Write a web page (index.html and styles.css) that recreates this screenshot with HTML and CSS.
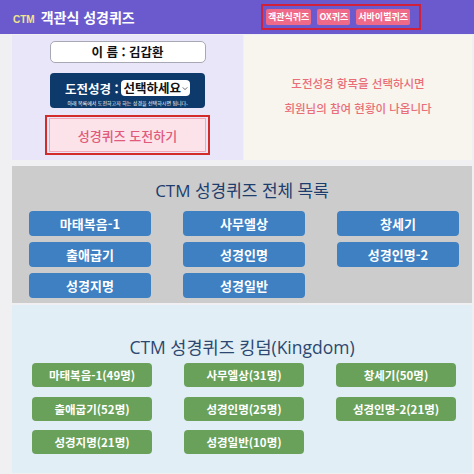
FILE: index.html
```html
<!DOCTYPE html>
<html lang="ko">
<head>
<meta charset="utf-8">
<link rel="stylesheet" href="styles.css">
</head>
<body>
<header class="topbar">
  <div class="brand"><span class="brand-ctm">CTM</span><span class="brand-title">객관식 성경퀴즈</span></div>
  <nav class="modes">
    <span class="mode">객관식퀴즈</span>
    <span class="mode">OX퀴즈</span>
    <span class="mode">서바이벌퀴즈</span>
  </nav>
</header>
<main class="page">
  <section class="top-row">
    <div class="panel-left">
      <div class="name-box">이 름 : 김갑환</div>
      <div class="choose-box">
        <div class="choose-line">
          <span class="choose-label">도전성경 :</span>
          <span class="choose-select">선택하세요<svg class="chev" viewBox="0 0 8 6" width="6" height="5"><path d="M1 1.5 L4 4.5 L7 1.5" fill="none" stroke="#555" stroke-width="1.2"/></svg></span>
        </div>
        <div class="choose-hint">아래 목록에서 도전하고자 하는 성경을 선택하시면 됩니다.</div>
      </div>
      <div class="start-outer"><div class="start-btn">성경퀴즈 도전하기</div></div>
    </div>
    <div class="panel-right">
      <p>도전성경 항목을 선택하시면</p>
      <p>회원님의 참여 현황이 나옵니다</p>
    </div>
  </section>
  <section class="list-section">
    <h2 class="list-title">CTM 성경퀴즈 전체 목록</h2>
    <div class="list-grid">
      <span class="btn-blue">마태복음-1</span>
      <span class="btn-blue">사무엘상</span>
      <span class="btn-blue">창세기</span>
      <span class="btn-blue">출애굽기</span>
      <span class="btn-blue">성경인명</span>
      <span class="btn-blue">성경인명-2</span>
      <span class="btn-blue">성경지명</span>
      <span class="btn-blue">성경일반</span>
    </div>
  </section>
  <section class="king-section">
    <h2 class="king-title">CTM 성경퀴즈 킹덤(Kingdom)</h2>
    <div class="king-grid">
      <span class="btn-green">마태복음-1(49명)</span>
      <span class="btn-green">사무엘상(31명)</span>
      <span class="btn-green">창세기(50명)</span>
      <span class="btn-green">출애굽기(52명)</span>
      <span class="btn-green">성경인명(25명)</span>
      <span class="btn-green">성경인명-2(21명)</span>
      <span class="btn-green">성경지명(21명)</span>
      <span class="btn-green">성경일반(10명)</span>
    </div>
  </section>
</main>
</body>
</html>
```
FILE: styles.css
```css
* { box-sizing: border-box; }
html, body { margin: 0; padding: 0; }
body {
  background: #f0f0f2;
  font-family: "Noto Sans CJK KR", "Noto Sans", sans-serif;
  width: 474px;
  height: 474px;
  overflow: hidden;
}
.topbar {
  height: 34px;
  background: #6a5acd;
  display: flex;
  align-items: center;
  padding-left: 13px;
}
.brand { display: flex; align-items: baseline; width: 248px; }
.brand-ctm {
  color: #f0e68c;
  font-family: "Liberation Sans", sans-serif;
  font-weight: bold;
  font-size: 10px;
  margin-right: 6px;
}
.brand-title {
  color: #fff;
  font-weight: bold;
  font-size: 14px;
}
.modes {
  display: flex;
  gap: 6px;
  border: 2px solid #d0203a;
  padding: 3px 9px 3px 3px;
  height: 26px;
  align-items: center;
}
.mode {
  background: #ef6a88;
  color: #fff;
  font-size: 9px;
  font-weight: bold;
  height: 16px;
  line-height: 16px;
  padding: 0 2px;
  border-radius: 2px;
}
.page {
  padding: 1px 2px 0 12px;
}
.top-row {
  display: flex;
  gap: 1px;
  height: 125px;
}
.panel-left {
  width: 231px;
  background: #e8e6f8;
  display: flex;
  flex-direction: column;
  align-items: center;
  padding-top: 6px;
}
.name-box {
  width: 156px;
  height: 22px;
  background: #fff;
  border: 1px solid #a8a8b4;
  border-radius: 5px;
  text-align: center;
  font-size: 12.5px;
  font-weight: bold;
  line-height: 20px;
  color: #111;
}
.choose-box {
  margin-top: 10px;
  width: 155px;
  height: 35px;
  background: #0e3a6b;
  border-radius: 4px;
  display: flex;
  flex-direction: column;
  align-items: center;
  padding-top: 4px;
}
.choose-line { display: flex; align-items: center; gap: 2px; height: 22px; }
.choose-label {
  color: #fff;
  font-weight: bold;
  font-size: 12.5px;
}
.choose-select {
  background: #fff;
  border-radius: 4px;
  color: #111;
  font-weight: bold;
  font-size: 12.5px;
  line-height: 16px;
  padding: 0 2px 0 3px;
  display: flex;
  align-items: center;
  gap: 1px;
}
.chev { display: block; }
.choose-hint {
  color: #fff;
  font-size: 5px;
  line-height: 6px;
  margin-top: 1px;
  white-space: nowrap;
}
.start-outer {
  margin-top: 7px;
  width: 165px;
  height: 40px;
  border: 2px solid #d32a2a;
  padding: 1px 2px;
}
.start-btn {
  height: 100%;
  background: #fce3ea;
  border: 1px solid #f2a8b8;
  color: #e05a7c;
  font-size: 13px;
  font-weight: 500;
  display: flex;
  align-items: center;
  justify-content: center;
}
.panel-right {
  flex: 1;
  background: #f7f5ee;
  display: flex;
  flex-direction: column;
  align-items: center;
  justify-content: center;
  padding-bottom: 4px;
}
.panel-right p {
  margin: 0;
  color: #ea6e78;
  font-size: 11.5px;
  font-weight: 500;
  line-height: 25px;
}
.list-section {
  margin-top: 6px;
  background: #cccccc;
  height: 137px;
  padding: 11px 0 0 17px;
}
.list-title {
  margin: 0;
  text-align: center;
  font-family: "Open Sans", "Noto Sans CJK KR", sans-serif;
  font-weight: normal;
  font-size: 17px;
  line-height: 28px;
  color: #1d3d6e;
  padding-right: 17px;
  height: 34px;
}
.list-grid {
  display: grid;
  grid-template-columns: repeat(3, 122px);
  column-gap: 32px;
  row-gap: 6px;
}
.btn-blue {
  background: #3e80c2;
  color: #fff;
  border-radius: 4px;
  height: 25px;
  text-align: center;
  font-weight: bold;
  font-size: 13px;
  line-height: 25px;
}
.king-section {
  margin-top: 2px;
  background: #e1eef5;
  height: 168px;
  padding: 28px 0 0 20px;
}
.king-title {
  margin: 0;
  text-align: center;
  font-family: "Open Sans", "Noto Sans CJK KR", sans-serif;
  font-weight: normal;
  font-size: 17.5px;
  line-height: 28px;
  color: #2c4870;
  padding-right: 20px;
  height: 30px;
}
.king-grid {
  display: grid;
  grid-template-columns: repeat(3, 120px);
  column-gap: 32px;
  row-gap: 9.5px;
}
.btn-green {
  background: #6aa15a;
  color: #fff;
  border-radius: 4px;
  height: 24px;
  text-align: center;
  font-weight: bold;
  font-size: 11.5px;
  line-height: 24px;
}
```
